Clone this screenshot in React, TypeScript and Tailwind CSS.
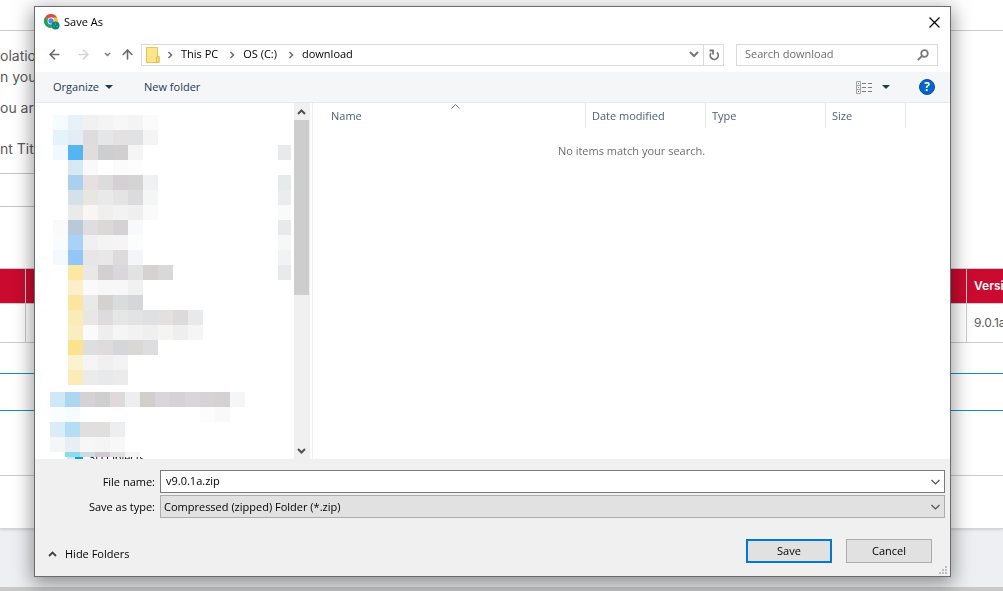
import React from 'react';
import { ArrowLeft, ArrowRight, ArrowUp } from 'lucide-react';

// Pixelated navigation entries, one colour per 15px cell, '' leaves a gap
const favourites: { cells: string[]; pin?: string }[] = [
  { cells: ['#f5fbff', '#e9f1f8', '#f1f1f1', '#f4f4f4', '#f7f7f7', '#f4f4f4', '#fbfbfb'] },
  { cells: ['#e4f3fb', '#e3eef4', '#dfdcdd', '#e4e6e7', '#e4e1e2', '#e0e2e3', '#f4f4f4'] },
  { cells: ['#f2f8fd', '#55b5f3', '#e1dddb', '#cccecf', '#d1cfcf', '#f5f5f5'], pin: '#e8e9ea' },
  { cells: ['', '#d8e9f6', '#f9f9f9', '', '#fbfbfb', '#fdfdfd'] },
  { cells: ['', '#aad0ef', '#e6e1e0', '#dcdcdc', '#d5d0d3', '#d4d4d4', '#f0f1f4'], pin: '#e5eaea' },
  { cells: ['', '#d4e1ea', '#e8e6e3', '#e9e9ea', '#e4e4e4', '#dbdbdd', '#f4f6f6'], pin: '#ebecee' },
  { cells: ['', '#e9ebea', '#f8f5f3', '#efefef', '#f2f2f2', '#efefef', '#fafafa'], pin: '#f9fbfa' },
  { cells: ['#fafafa', '#b9c9d9', '#dfdddf', '#dad9d7', '#d4d2d4', '#f8f9fb'], pin: '#e8e9ea' },
  { cells: ['#f8fcff', '#a9d2f9', '#f0f0f0', '#f4f4f4', '#f5f5f5', '#fcfcfc'], pin: '#f6f8f7' },
  { cells: ['#f4f9ff', '#92c6f7', '#e8e5e6', '#e8e8e8', '#dddbdc', '#f4f5f7'], pin: '#f1f2f4' },
  { cells: ['', '#fde8a2', '#e8e8e8', '#d3d0d1', '#d9d7da', '#e2e2e2', '#d5d3d2', '#d8d8da'], pin: '#e8e9ea' },
  { cells: ['', '#fcefca', '#fafafa', '#f7f7f7', '#f7f7f7', '#f1f1f1'] },
  { cells: ['', '#fbe6a0', '#e9e9e9', '#d4d2cf', '#dadbdc', '#d5d6d8'] },
  { cells: ['', '#fbebb6', '#e8e7e5', '#dddbde', '#e6e6e6', '#e3e3e3', '#dfe0e1', '#e2e1df', '#dddadb', '#e8e9ea'] },
  { cells: ['', '#faeec0', '#fafafa', '#eeeeef', '#f5f5f5', '#f2f2f2', '#efefef', '#f4f4f1', '#eeeeee', '#f5f5f5'] },
  { cells: ['', '#fae28f', '#dededd', '#dfdadb', '#d4d6da', '#d9d8d5', '#dddde0'] },
  { cells: ['', '#fdf2d0', '#f5f5f5', '#f0f0f0', '#f3f3f3'] },
  { cells: ['', '#fbebb7', '#ebebeb', '#e8e9eb', '#ebebeb'] },
];

const drives: string[][] = [
  ['#d0e7f8', '#aed6f0', '#d5d2d3', '#d0cfcf', '#dfdad8', '#edeeef', '#d1cfcc', '#d8d6da', '#d5d2d6', '#d8d6d8', '#d6d3d7', '#d4d1d2', '#f5f6f7'],
  ['#f9fdff', '#f5fbff', '', '', '', '', '', '', '', '', '#fcfcfc', '#f9f9f9'],
  ['#d9ecf8', '#b3def6', '#e1dedf', '#e1dede', '#edeef0'],
  ['#f3f7f8', '#e9eef4', '#f7f7f7', '#f5f5f5', '#f8f8f8'],
];

const Cells: React.FC<{ cells: string[] }> = ({ cells }) => (
  <div className="flex">
    {cells.map((color, i) => (
      <div key={i} className="w-[15px] h-[15px]" style={{ backgroundColor: color || undefined }} />
    ))}
  </div>
);

type ChevronProps = { className?: string; d: string; w: number; h: number; stroke?: number };

const Chevron: React.FC<ChevronProps> = ({ className, d, w, h, stroke = 1.5 }) => (
  <svg width={w} height={h} viewBox={`0 0 ${w} ${h}`} className={className} fill="none" stroke="currentColor" strokeWidth={stroke}>
    <path d={d} />
  </svg>
);

const Crumb: React.FC<{ label: string }> = ({ label }) => (
  <>
    <Chevron className="shrink-0 text-[#6b6b6b]" d="M1.500 1l3 3-3 3" w={6} h={8} />
    <button className="pl-2 pr-[11px] pb-[2px] whitespace-nowrap">{label}</button>
  </>
);

const ChromeIcon = () => (
  <svg width="16" height="16" viewBox="0 0 16 16">
    <circle cx="7" cy="7" r="7" fill="#fbc12d" />
    <path d="M7 7L.9 3.5A7 7 0 0 1 13.1 3.5H7z" fill="#dd4b3e" />
    <path d="M7 7L.9 3.5A7 7 0 0 0 7 14l3-5z" fill="#1da462" />
    <circle cx="7" cy="7" r="3.4" fill="#fff" />
    <circle cx="7" cy="7" r="2.7" fill="#4a8af4" />
    <circle cx="11.5" cy="11.5" r="4" fill="#0b8577" />
    <path d="M11 9.5h1v1h-1zM9.5 11.5h1v1h-1zM12.5 12h1v1h-1z" fill="#7cc9be" />
  </svg>
);

const FolderIcon = () => (
  <svg width="14" height="16" viewBox="0 0 14 16" className="shrink-0">
    <path d="M.5.5h11v9h1.5v6H.5z" fill="#ffe48f" stroke="#e9c451" />
    <path d="M10.5 15V10l2.5-.5v6z" fill="#ffe48f" stroke="#e9b93a" />
  </svg>
);

const ViewIcon = () => (
  <svg width="16" height="13" viewBox="0 0 16 13" fill="none">
    <path d="M.5.5h4v12h-4zM.5 4.5h4M.5 8.5h4" stroke="#a3a3a3" />
    <path d="M2 2h1v1H2z" fill="#4c8a6a" />
    <path d="M2 6h1v1H2z" fill="#2a8fe8" />
    <path d="M2 10h1v1H2z" fill="#e02020" />
    <path d="M6 2.5h4M12 2.5h4M6 6.5h4M12 6.5h4M6 10.5h4M12 10.5h4" stroke="#7a7a7a" />
  </svg>
);

const Page = () => (
  <div className="flex flex-col h-screen overflow-hidden bg-[#eeeff2] font-['Inter',sans-serif] text-sm text-[#58595b]">
    <main className="flex flex-col h-[529px] bg-white border-b border-[#d5d5d5] shadow-sm">
      <div className="h-[31px] border-b border-[#cccccc]" />
      <div className="flex flex-col h-[143px] w-1/2 pt-[14px] border-b border-[#c4c4c4] whitespace-nowrap">
        <p className="leading-[21px]">olation</p>
        <p className="leading-[21px]">n your</p>
        <p className="mt-[10px] leading-[21px]">ou are</p>
        <p className="mt-5 leading-[21px]">nt Title</p>
      </div>
      <div className="h-[33px] w-1/2 border-b border-[#c4c4c4]" />
      <table className="mt-[61px] w-full table-fixed border-separate border-spacing-0 text-left">
        <thead>
          <tr className="h-[35px] bg-[#cb0a2f] text-white">
            <th className="w-[26px] border-t border-r border-[#cccccc]" />
            <th className="border-t border-r border-[#cccccc]" />
            <th className="w-9 pl-[7px] border-t border-[#cccccc] text-xs font-semibold">Version</th>
          </tr>
        </thead>
        <tbody>
          <tr className="h-10">
            <td className="border-y border-r border-[#cccccc]" />
            <td className="border-y border-r border-[#cccccc]" />
            <td className="pl-[7px] border-y border-[#cccccc] text-xs">9.0.1a</td>
          </tr>
        </tbody>
      </table>
      <div className="mt-[30px] h-[38px] border-y border-[#0d93b9]" />
      <div className="h-[65px] border-b border-[#cccccc]" />
    </main>
    <footer className="mt-auto h-1 bg-[#c8c9c8]" />
  </div>
);

const Sidebar = () => (
  <nav className="flex w-[275px] shrink-0">
    <div className="flex flex-col flex-1 min-w-0 overflow-hidden pt-3">
      <div className="pl-[18px] pr-[3px]">
        {favourites.map((row, i) => (
          <div key={i} className="flex justify-between">
            <Cells cells={row.cells} />
            <div className="w-[13px]" style={{ backgroundColor: row.pin }} />
          </div>
        ))}
      </div>
      <div className="mt-[7px] pl-[15px]">
        {drives.map((cells, i) => (
          <Cells key={i} cells={cells} />
        ))}
        <div className="h-[5px] overflow-hidden">
          <Cells cells={['', '#8adce8', '#cbdde3', '#d0cbd0', '#e3e1e3', '#f5f5f5']} />
        </div>
      </div>
      <div className="flex items-center h-[2px] pl-8 gap-[6px] overflow-hidden">
        <div className="flex w-4">
          <div className="w-2 h-2 bg-[#c9ecf4]" />
          <div className="w-2 h-2 bg-[#0a9fd8]" />
        </div>
        <span className="leading-4">3D Objects</span>
      </div>
    </div>
    {/* Scrollbar */}
    <div className="flex flex-col w-4 bg-[#f0f0f0]">
      <button aria-label="Scroll up" className="flex items-center justify-center w-[15px] h-[17px]">
        <Chevron className="text-[#505050]" d="M1 5l3.500-3.500L8 5" w={9} h={6} stroke={2} />
      </button>
      <div className="w-[15px] h-[175px] bg-[#cdcdcd]" />
      <button aria-label="Scroll down" className="mt-auto flex items-center justify-center w-[15px] h-[17px]">
        <Chevron className="text-[#505050]" d="M1 1l3.500 3.500L8 1" w={9} h={6} stroke={2} />
      </button>
    </div>
  </nav>
);

const FileList = () => (
  <section className="flex-1 min-w-0 ml-[2px] border-l border-[#f0f0f0]">
    <table className="w-full table-fixed border-separate border-spacing-0 text-left">
      <thead>
        <tr className="h-[25px] text-[#4c607a]">
          <th className="relative w-[273px] pl-[18px] font-normal border-r border-[#e5e5e5]">
            <Chevron className="absolute top-[1px] left-[138px] text-[#6b6b6b]" d="M.5 4.500l4-4 4 4" w={9} h={5} stroke={1} />
            Name
          </th>
          <th className="w-[120px] pl-[6px] font-normal border-r border-[#e5e5e5]">Date modified</th>
          <th className="w-[120px] pl-[6px] font-normal border-r border-[#e5e5e5]">Type</th>
          <th className="w-20 pl-[6px] font-normal border-r border-[#e5e5e5]">Size</th>
          <th />
        </tr>
      </thead>
      <tbody>
        <tr>
          <td colSpan={5} className="pt-[15px] text-center text-[#6d6d6d]">No items match your search.</td>
        </tr>
      </tbody>
    </table>
  </section>
);

const SaveDialog = () => (
  <div
    role="dialog"
    aria-label="Save As"
    className="flex flex-col flex-1 min-w-0 bg-white border border-[#6b6b6b] shadow-[0_5px_18px_2px_rgba(0,0,0,0.4)] font-['Open_Sans',sans-serif] text-[11px] leading-4 text-black"
  >
    <header className="flex items-center gap-1 h-[30px] pl-[9px] pr-[10px]">
      <ChromeIcon />
      <h1>Save As</h1>
      <button aria-label="Close" className="ml-auto">
        <Chevron d="M.5.5l10 10M10.500.5l-10 10" w={11} h={11} stroke={1.2} />
      </button>
    </header>

    {/* Address bar */}
    <div className="flex items-center h-[35px] pl-3 pr-3">
      <button aria-label="Back" className="text-[#6b6b6b]"><ArrowLeft size={15} strokeWidth={2.5} /></button>
      <button aria-label="Forward" className="ml-[14px] text-[#d5d5d5]"><ArrowRight size={15} strokeWidth={2.5} /></button>
      <button aria-label="Recent locations" className="ml-[13px] text-[#7a7a7a]">
        <Chevron d="M1 1l2.500 2.500L6 1" w={7} h={5} />
      </button>
      <button aria-label="Up" className="ml-[9px] mr-[6px] text-[#6b6b6b]"><ArrowUp size={15} strokeWidth={2.5} /></button>
      <div className="flex flex-1 items-center h-[22px] pl-1 border border-[#d9d9d9]">
        <FolderIcon />
        <div className="flex items-center ml-[7px]">
          <Crumb label="This PC" />
          <Crumb label="OS (C:)" />
          <Crumb label="download" />
        </div>
        <button aria-label="Previous locations" className="ml-auto mr-1 text-[#777777]">
          <Chevron d="M1 1l4 4 4-4" w={10} h={7} stroke={2} />
        </button>
        <button aria-label="Refresh" className="flex items-center justify-center w-5 h-5 border-l border-[#d9d9d9] text-[#777777]">
          <svg width="12" height="12" viewBox="0 0 12 12" fill="none" stroke="currentColor" strokeWidth="1.8">
            <path d="M9 3.500A4 4 0 1 1 3 4M1.500 1.500h3.500V5.500" />
          </svg>
        </button>
      </div>
      <label className="flex items-center w-[202px] h-[22px] ml-3 pl-2 pr-2 border border-[#d9d9d9]">
        <input aria-label="Search download" placeholder="Search download" className="flex-1 min-w-0 pb-[2px] outline-none placeholder:text-[#6d6d6d]" />
        <svg width="12" height="12" viewBox="0 0 12 12" fill="none" stroke="#777777" strokeWidth="1.8">
          <circle cx="7.500" cy="4.500" r="3.300" />
          <path d="M5 7L.8 11.200" />
        </svg>
      </label>
    </div>

    {/* Toolbar */}
    <div className="flex items-center h-[31px] pl-[18px] pr-[15px] bg-[#f5f6f7] border-b border-[#e8e9eb] text-[#1e395b]">
      <button className="flex items-center gap-[6px]">
        Organize
        <svg width="8" height="4" viewBox="0 0 8 4" fill="currentColor"><path d="M0 0h8L4 4z" /></svg>
      </button>
      <button className="ml-[31px]">New folder</button>
      <button aria-label="Change view" className="flex items-center gap-[10px] ml-auto">
        <ViewIcon />
        <svg width="8" height="4" viewBox="0 0 8 4" fill="currentColor"><path d="M0 0h8L4 4z" /></svg>
      </button>
      <button aria-label="Help" className="flex items-center justify-center w-4 h-4 ml-[29px] rounded-full bg-[#0067cb] border border-[#0a4f96] text-white text-xs font-bold">?</button>
    </div>

    <div className="flex flex-1 min-h-0">
      <Sidebar />
      <FileList />
    </div>

    <form className="flex flex-col h-[117px] pt-[11px] bg-[#f0f0f0]" onSubmit={(e) => e.preventDefault()}>
      <div className="grid grid-cols-[120px_1fr] items-center gap-x-[5px] gap-y-[2px] pr-[5px] text-right">
        <label htmlFor="file-name">File name:</label>
        <div className="flex items-center h-[23px] pl-[5px] pr-1 bg-white border border-[#7a7a7a]">
          <input id="file-name" defaultValue="v9.0.1a.zip" className="flex-1 min-w-0 pb-[2px] outline-none" />
          <Chevron className="text-[#505050]" d="M.5 1l4 4 4-4" w={9} h={6} stroke={1.2} />
        </div>
        <label htmlFor="file-type">Save as type:</label>
        <div className="flex items-center h-[23px] pl-[3px] pr-1 bg-[#e1e1e1] border border-[#adadad]">
          <select id="file-type" className="flex-1 min-w-0 appearance-none outline-none">
            <option>Compressed (zipped) Folder (*.zip)</option>
          </select>
          <Chevron className="text-[#505050]" d="M.5 1l4 4 4-4" w={9} h={6} stroke={1.2} />
        </div>
      </div>
      <div className="relative flex items-center mt-[21px] pl-[13px] pr-[18px]">
        <button type="button" className="flex items-center gap-2 mt-[6px]">
          <Chevron className="text-[#404040]" d="M1 5l3.500-3.500L8 5" w={9} h={6} stroke={1.8} />
          Hide Folders
        </button>
        <button type="submit" className="w-[86px] h-6 ml-auto bg-[#e1e1e1] border-2 border-[#0078d7]">Save</button>
        <button type="button" className="w-[86px] h-6 ml-[14px] bg-[#e1e1e1] border border-[#adadad]">Cancel</button>
        {/* Resize grip */}
        <svg width="8" height="8" viewBox="0 0 8 8" fill="#bfbfbf" className="absolute right-[3px] -bottom-[11px]">
          <path d="M6 0h2v2H6zM3 3h2v2H3zM6 3h2v2H6zM0 6h2v2H0zM3 6h2v2H3zM6 6h2v2H6z" />
        </svg>
      </div>
    </form>
  </div>
);

const App: React.FC = () => {
  return (
    <>
      <Page />
      <div className="fixed inset-0 flex pt-[6px] pr-[52px] pb-[14px] pl-[34px]">
        <SaveDialog />
      </div>
    </>
  );
};

export default App;
